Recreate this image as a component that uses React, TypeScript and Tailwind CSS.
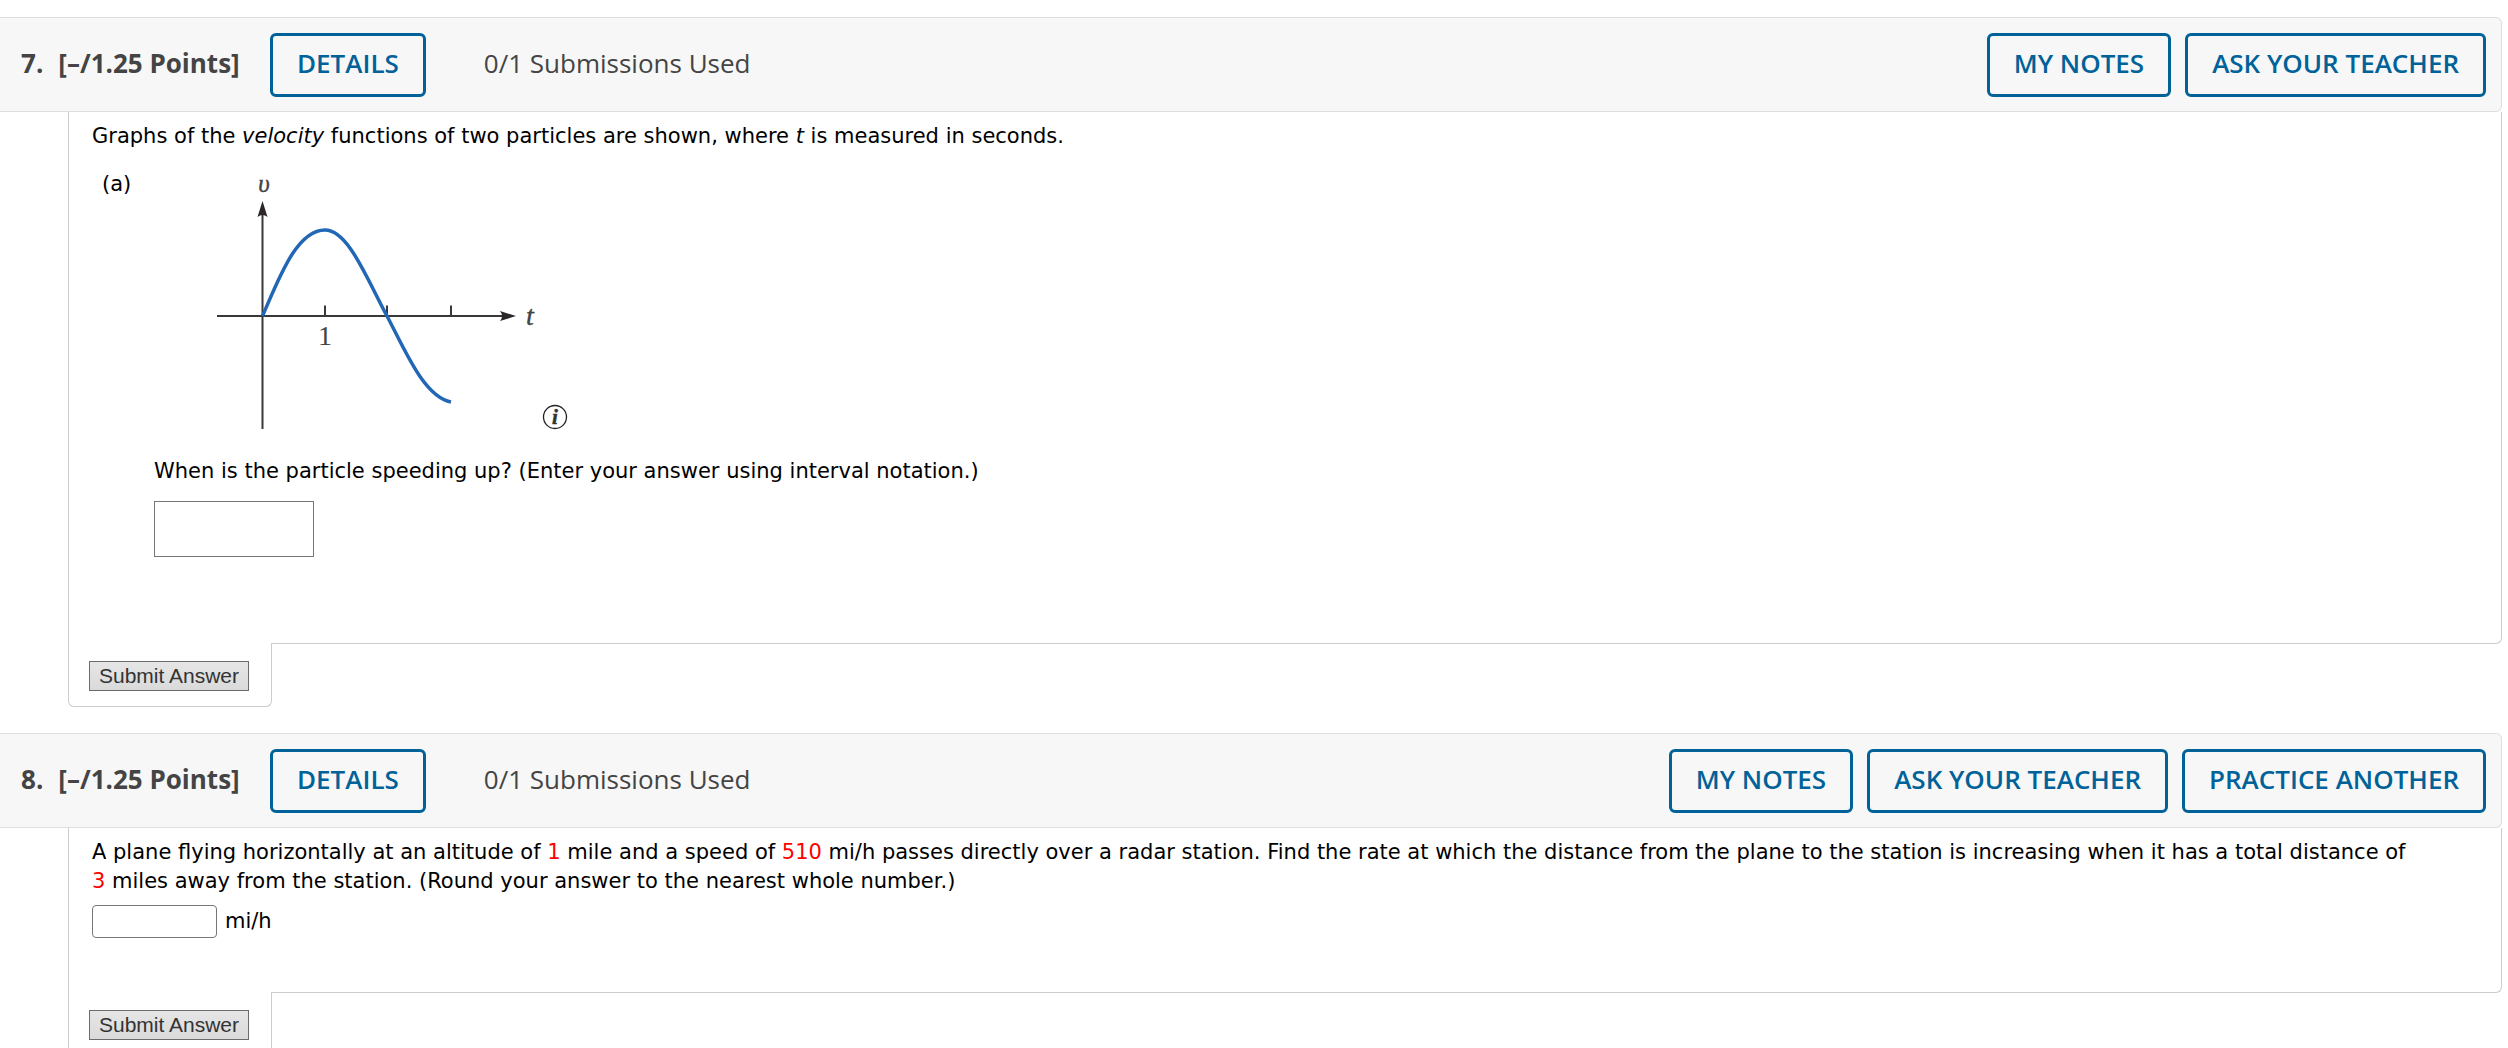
import type { ReactNode } from "react";

function OutlineButton({ children }: { children: ReactNode }) {
  return (
    <button
      type="button"
      className="h-16 rounded-md border-[3px] border-[#006298] px-6 pb-1 text-[26px] leading-9 font-semibold whitespace-nowrap text-[#006298]"
    >
      {children}
    </button>
  );
}

function Red({ children }: { children: ReactNode }) {
  return <span className="text-[#f00]">{children}</span>;
}

interface QuestionProps {
  number: number;
  actions: string[];
  children: ReactNode;
}

function Question({ number, actions, children }: QuestionProps) {
  return (
    <section className="mr-1.5 mb-[26px]">
      <header className="flex h-[95px] items-center rounded-r-md border-y border-r border-[#dedede] bg-[#f7f7f7] pr-[15px] pl-[21px] font-['Open_Sans',sans-serif] text-[26px] leading-9 text-[#444]">
        <h2 className="flex w-[249px] shrink-0 gap-[15px] pb-1 font-bold whitespace-nowrap">
          <span>{number}.</span>
          <span>[–/1.25 Points]</span>
        </h2>
        <OutlineButton>DETAILS</OutlineButton>
        <p className="ml-[58px] pb-1">0/1 Submissions Used</p>
        <div className="ml-auto flex gap-[14px]">
          {actions.map((action) => (
            <OutlineButton key={action}>{action}</OutlineButton>
          ))}
        </div>
      </header>
      <div className="ml-[68px]">
        <div className="rounded-br-md border-x border-b border-[#ccc] pl-[23px]">{children}</div>
        <div className="-mt-px w-[204px] rounded-b-md border-x border-b border-[#ccc] bg-white pt-[18px] pb-[15px] pl-5">
          <button
            type="button"
            className="flex h-[30px] w-40 items-center justify-center border border-[#6b6b6b] bg-linear-to-b from-[#e6e6e6] to-[#dadada] font-['Liberation_Sans',Arial,sans-serif] text-[21px] leading-7 whitespace-nowrap text-[#333]"
          >
            Submit Answer
          </button>
        </div>
      </div>
    </section>
  );
}

function VelocityGraph() {
  return (
    <svg
      width="320"
      height="260"
      viewBox="212 172 320 260"
      className="overflow-visible"
      role="img"
      aria-label="Velocity graph"
    >
      <path
        d="M262.500 212V429M217 316H505M325 305.500V316M387 305.500V316M451 305.500V316"
        stroke="#3a3738"
        strokeWidth="2"
        fill="none"
      />
      <path
        d="M262.500 316C278 281 296 230 325 230C348 230 366 277 387 316C405 350 424 397 451 402"
        fill="none"
        stroke="#2266b6"
        strokeWidth="3.500"
      />
      <path d="M262.500 201L267.500 217Q262.500 213 257.500 217Z M516 316L500 321Q504 316 500 311Z" fill="#2b2728" />
      <g fill="#444" fontFamily="Liberation Serif, serif" textAnchor="middle">
        <text x="264" y="192" fontSize="25" fontStyle="italic" stroke="#444" strokeWidth="0.400">
          υ
        </text>
        <text x="530" y="325" fontSize="28" fontStyle="italic" stroke="#444" strokeWidth="0.400">
          t
        </text>
        <text x="325" y="345" fontSize="28">
          1
        </text>
      </g>
    </svg>
  );
}

export default function App() {
  return (
    <main className="h-screen overflow-hidden bg-white pt-[17px] font-[Verdana,'DejaVu_Sans',sans-serif] text-[21px] leading-[29px] text-black">
      <Question number={7} actions={["MY NOTES", "ASK YOUR TEACHER"]}>
        <div className="pt-[10px] pb-[86px]">
          <p>
            Graphs of the <i>velocity</i> functions of two particles are shown, where <i>t</i> is measured in seconds.
          </p>
          <div className="mt-[19px] flex items-start pl-[10px]">
            <span className="w-[110px]">(a)</span>
            <div className="flex items-end gap-[10px] pt-[2px]">
              <VelocityGraph />
              <button type="button" aria-label="Image description" className="mb-[2px]">
                <svg width="26" height="26" viewBox="0 0 26 26">
                  <circle cx="13" cy="13" r="11.500" fill="none" stroke="#222" strokeWidth="1.300" />
                  <text
                    x="13"
                    y="20"
                    fontSize="21"
                    fontWeight="bold"
                    fontStyle="italic"
                    textAnchor="middle"
                    fontFamily="Liberation Serif, serif"
                    fill="#333"
                    stroke="#333"
                    strokeWidth="0.500"
                  >
                    i
                  </text>
                </svg>
              </button>
            </div>
          </div>
          <div className="flex flex-col items-start gap-[15px] pt-[25px] pl-[62px]">
            <label htmlFor="speeding-up">
              When is the particle speeding up? (Enter your answer using interval notation.)
            </label>
            <input id="speeding-up" type="text" className="h-14 w-40 border border-[#767676] px-2" />
          </div>
        </div>
      </Question>
      <Question number={8} actions={["MY NOTES", "ASK YOUR TEACHER", "PRACTICE ANOTHER"]}>
        <div className="pt-[10px] pr-20 pb-[54px]">
          <p>
            A plane flying horizontally at an altitude of <Red>1</Red> mile and a speed of <Red>510</Red> mi/h passes
            directly over a radar station. Find the rate at which the distance from the plane to the station is
            increasing when it has a total distance of <Red>3</Red> miles away from the station. (Round your answer to
            the nearest whole number.)
          </p>
          <div className="mt-[9px] flex items-center gap-2">
            <input id="rate" type="text" className="h-[33px] w-[125px] rounded-sm border border-[#767676] px-1" />
            <label htmlFor="rate">mi/h</label>
          </div>
        </div>
      </Question>
    </main>
  );
}
